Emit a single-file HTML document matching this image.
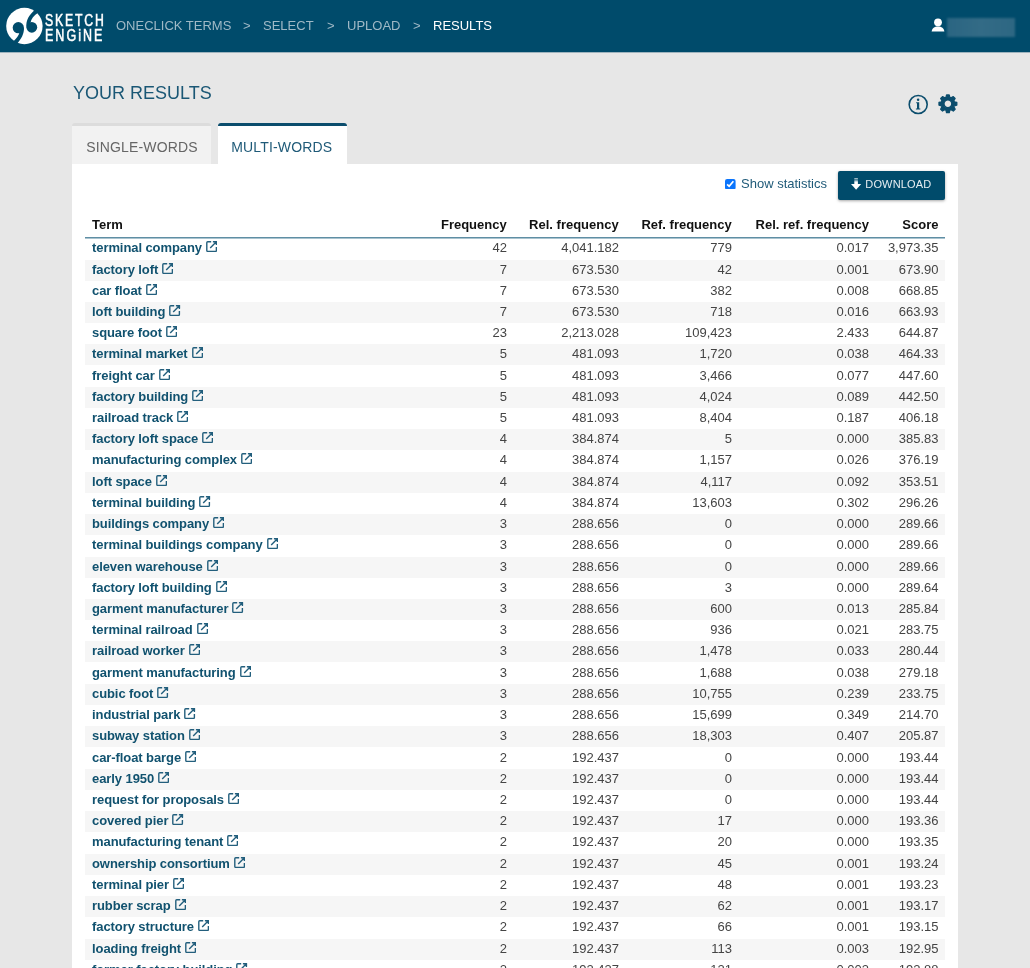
<!DOCTYPE html>
<html><head><meta charset="utf-8">
<style>
*{box-sizing:border-box}
html,body{margin:0;padding:0}
body{width:1030px;height:968px;overflow:hidden;-webkit-font-smoothing:antialiased;background:#e7e7e7;font-family:"Liberation Sans",sans-serif;position:relative}
.hdr{position:absolute;left:0;top:0;width:1030px;height:52px;background:#004b6b;box-shadow:0 1px 0 #9fb4be}
.logo{position:absolute;left:4px;top:6px}
.brand{position:absolute;color:#fff;font-size:16px;line-height:14.5px;-webkit-text-stroke:0.55px #fff;transform-origin:0 0;white-space:nowrap}
.crumbs{position:absolute;left:116px;top:18px;font-size:13px;line-height:16px;color:#9fb9c6;white-space:nowrap}
.crumbs span{position:absolute;top:0}
.crumbs .cur{color:#fff}
.user{position:absolute;left:931px;top:17px}
.blur{position:absolute;left:947px;top:18px;width:68px;height:19px;background:linear-gradient(90deg,#2a6582,#336b86,#2d6783);filter:blur(1px)}
.title{position:absolute;left:73px;top:83px;font-size:18px;line-height:20px;color:#1a5775}
.icons{position:absolute;left:900px;top:88px}
.tab1{position:absolute;left:72px;top:123px;width:139.3px;border-radius:3px 3px 0 0;height:41px;background:#f2f2f2;border-top:3px solid #dcdcdc;color:#666;font-size:14px}
.tab1 span{position:absolute;left:14.3px;top:13px;letter-spacing:0.15px}
.tab2{position:absolute;left:218px;top:123px;width:129px;border-radius:3px 3px 0 0;height:41px;background:#fff;border-top:3px solid #0b4d6d;color:#1f5a78;font-size:14px}
.tab2 span{position:absolute;left:13.3px;top:13px;letter-spacing:0.15px}
.panel{position:absolute;left:72px;top:164px;width:886px;height:820px;background:#fff}
.stat{position:absolute;left:741px;top:176px;font-size:13px;color:#1f5a78}
.dl{position:absolute;left:838px;top:171px;width:107px;height:28.5px;background:#004b6b;border-radius:2px;box-shadow:0 1px 3px rgba(0,0,0,.35);color:#fff;font-size:11px}
.dl span{position:absolute;left:27.3px;top:7.3px;letter-spacing:0.15px;color:#e6eef2}
.dl svg{position:absolute;left:13px;top:7px}
.th{position:absolute;top:217px;font-size:13px;font-weight:700;color:#111;white-space:nowrap;line-height:16px}
.hline{position:absolute;left:85px;top:237px;width:860px;height:2px;background:linear-gradient(#5f8ea4 50%,#a9c3cf 50%)}
.r{position:absolute;left:85px;width:860px;height:21px;font-size:13px;line-height:16px;white-space:nowrap}
.r.odd{background:#f6f6f6}
.r span{position:absolute;top:2px}
.t{left:7px;font-weight:700;color:#11526f;letter-spacing:-0.08px}
.n{color:#444;text-align:right}
.c1{right:438px}.c2{right:326px}.c3{right:213px}.c4{right:76px}.c5{right:6.5px}
.ext{display:inline-block;vertical-align:baseline;margin:0 0 0 4.0px;color:#235f7d;letter-spacing:0}
</style></head><body><div id="wrap" style="position:absolute;left:0;top:0;width:1030px;height:968px;will-change:transform">
<div class="hdr">
  <svg class="logo" width="42" height="42" viewBox="0 0 42 42">
    <circle cx="20.4" cy="20" r="18.2" fill="#fff"/>
    <g fill="#004b6b">
      <circle cx="14.3" cy="21.7" r="5.6"/>
      <path d="M19.9 21.5 C20.3 27.5 17.5 33 12.3 38.5 L8.5 36.2 C12.5 32.5 15 29.5 15.6 26 Z"/>
      <circle cx="27.8" cy="21.3" r="5.4"/>
      <path d="M22.4 21 C21.8 14.5 25 9 31 3.8 L34.5 6.5 C29.8 9.5 27.2 12.5 26.4 17 Z"/>
    </g>
  </svg>
  <div class="brand" style="left:45.1px;top:14px;letter-spacing:2.4px;transform:scaleX(0.765)">SKETCH</div><div class="brand" style="left:44.8px;top:28.5px;letter-spacing:2.6px;transform:scaleX(0.78)">ENGiNE</div>
  <div class="crumbs"><span style="left:0">ONECLICK TERMS</span><span style="left:127px">&gt;</span><span style="left:147px">SELECT</span><span style="left:211px">&gt;</span><span style="left:231px">UPLOAD</span><span style="left:297px">&gt;</span><span class="cur" style="left:317px">RESULTS</span></div>
  <svg class="user" width="14" height="15" viewBox="0 0 14 15"><circle cx="7" cy="5.3" r="3.9" fill="#fff"/><path d="M0.6 14.6C1.1 10.9 3.4 9.4 7 9.4C10.6 9.4 12.9 10.9 13.4 14.6Z" fill="#fff"/></svg>
  <div class="blur"></div>
</div>
<div class="title">YOUR RESULTS</div>
<svg class="icons" width="64" height="32" viewBox="0 0 64 32">
  <circle cx="18.2" cy="16.5" r="9" fill="none" stroke="#0b4d6d" stroke-width="1.6"/>
  <circle cx="18.1" cy="11.8" r="1.25" fill="#0b4d6d"/>
  <path d="M16.2 14.2H19.2V20.6H20.3V21.6H15.9V20.6H17V15.2H16.2Z" fill="#0b4d6d"/>
  <path d="M45.93 9.40 L46.60 6.89 L49.20 6.89 L49.87 9.40 L51.03 9.88 L53.28 8.59 L55.11 10.42 L53.82 12.67 L54.30 13.83 L56.81 14.50 L56.81 17.10 L54.30 17.77 L53.82 18.93 L55.11 21.18 L53.28 23.01 L51.03 21.72 L49.87 22.20 L49.20 24.71 L46.60 24.71 L45.93 22.20 L44.77 21.72 L42.52 23.01 L40.69 21.18 L41.98 18.93 L41.50 17.77 L38.99 17.10 L38.99 14.50 L41.50 13.83 L41.98 12.67 L40.69 10.42 L42.52 8.59 L44.77 9.88ZM51.80 15.80A3.9 3.9 0 1 0 44.00 15.80A3.9 3.9 0 1 0 51.80 15.80Z" fill="#0b4d6d" fill-rule="evenodd" stroke="#0b4d6d" stroke-width="1.3" stroke-linejoin="round"/>
</svg>
<div class="tab1"><span>SINGLE-WORDS</span></div>
<div class="tab2"><span>MULTI-WORDS</span></div>
<div class="panel"></div>
<svg style="position:absolute;left:725px;top:178.6px" width="10.6" height="10.6" viewBox="0 0 11 11"><rect x="0" y="0" width="11" height="11" rx="2.2" fill="#0b75fc"/><path d="M2.2 5.6L4.3 7.6L8.7 2.4" fill="none" stroke="#fff" stroke-width="1.8"/></svg>
<div class="stat">Show statistics</div>
<div class="dl"><svg width="12" height="13" viewBox="0 0 12 13"><rect x="3.3" y="0" width="3.6" height="1" fill="#fff" opacity=".6"/><rect x="3.3" y="1.6" width="3.6" height="1" fill="#fff" opacity=".8"/><rect x="3.3" y="3.2" width="3.6" height="3" fill="#fff"/><path d="M0 6H10.2L5.1 11.8Z" fill="#fff"/></svg><span>DOWNLOAD</span></div>
<div class="th" style="left:92px">Term</div>
<div class="th" style="right:523.3px">Frequency</div>
<div class="th" style="right:411.3px">Rel. frequency</div>
<div class="th" style="right:298.3px">Ref. frequency</div>
<div class="th" style="right:161px">Rel. ref. frequency</div>
<div class="th" style="right:91.5px">Score</div>
<div class="hline"></div>
<div class="r" style="top:238px"><span class="t">terminal company<svg class="ext" width="11.2" height="11.2" viewBox="0 0 11.2 11.2"><path d="M5.2 0.8H1.7Q0.8 0.8 0.8 1.7V9.5Q0.8 10.4 1.7 10.4H9.5Q10.4 10.4 10.4 9.5V5.9M6.9 0.8H10.4V3.9M10.1 1.1L4.2 7" fill="none" stroke="currentColor" stroke-width="1.4"/><path d="M8.3 0.15H11.05V2.9Z" fill="currentColor"/></svg></span><span class="n c1">42</span><span class="n c2">4,041.182</span><span class="n c3">779</span><span class="n c4">0.017</span><span class="n c5">3,973.35</span></div>
<div class="r odd" style="top:260px"><span class="t">factory loft<svg class="ext" width="11.2" height="11.2" viewBox="0 0 11.2 11.2"><path d="M5.2 0.8H1.7Q0.8 0.8 0.8 1.7V9.5Q0.8 10.4 1.7 10.4H9.5Q10.4 10.4 10.4 9.5V5.9M6.9 0.8H10.4V3.9M10.1 1.1L4.2 7" fill="none" stroke="currentColor" stroke-width="1.4"/><path d="M8.3 0.15H11.05V2.9Z" fill="currentColor"/></svg></span><span class="n c1">7</span><span class="n c2">673.530</span><span class="n c3">42</span><span class="n c4">0.001</span><span class="n c5">673.90</span></div>
<div class="r" style="top:281px"><span class="t">car float<svg class="ext" width="11.2" height="11.2" viewBox="0 0 11.2 11.2"><path d="M5.2 0.8H1.7Q0.8 0.8 0.8 1.7V9.5Q0.8 10.4 1.7 10.4H9.5Q10.4 10.4 10.4 9.5V5.9M6.9 0.8H10.4V3.9M10.1 1.1L4.2 7" fill="none" stroke="currentColor" stroke-width="1.4"/><path d="M8.3 0.15H11.05V2.9Z" fill="currentColor"/></svg></span><span class="n c1">7</span><span class="n c2">673.530</span><span class="n c3">382</span><span class="n c4">0.008</span><span class="n c5">668.85</span></div>
<div class="r odd" style="top:302px"><span class="t">loft building<svg class="ext" width="11.2" height="11.2" viewBox="0 0 11.2 11.2"><path d="M5.2 0.8H1.7Q0.8 0.8 0.8 1.7V9.5Q0.8 10.4 1.7 10.4H9.5Q10.4 10.4 10.4 9.5V5.9M6.9 0.8H10.4V3.9M10.1 1.1L4.2 7" fill="none" stroke="currentColor" stroke-width="1.4"/><path d="M8.3 0.15H11.05V2.9Z" fill="currentColor"/></svg></span><span class="n c1">7</span><span class="n c2">673.530</span><span class="n c3">718</span><span class="n c4">0.016</span><span class="n c5">663.93</span></div>
<div class="r" style="top:323px"><span class="t">square foot<svg class="ext" width="11.2" height="11.2" viewBox="0 0 11.2 11.2"><path d="M5.2 0.8H1.7Q0.8 0.8 0.8 1.7V9.5Q0.8 10.4 1.7 10.4H9.5Q10.4 10.4 10.4 9.5V5.9M6.9 0.8H10.4V3.9M10.1 1.1L4.2 7" fill="none" stroke="currentColor" stroke-width="1.4"/><path d="M8.3 0.15H11.05V2.9Z" fill="currentColor"/></svg></span><span class="n c1">23</span><span class="n c2">2,213.028</span><span class="n c3">109,423</span><span class="n c4">2.433</span><span class="n c5">644.87</span></div>
<div class="r odd" style="top:344px"><span class="t">terminal market<svg class="ext" width="11.2" height="11.2" viewBox="0 0 11.2 11.2"><path d="M5.2 0.8H1.7Q0.8 0.8 0.8 1.7V9.5Q0.8 10.4 1.7 10.4H9.5Q10.4 10.4 10.4 9.5V5.9M6.9 0.8H10.4V3.9M10.1 1.1L4.2 7" fill="none" stroke="currentColor" stroke-width="1.4"/><path d="M8.3 0.15H11.05V2.9Z" fill="currentColor"/></svg></span><span class="n c1">5</span><span class="n c2">481.093</span><span class="n c3">1,720</span><span class="n c4">0.038</span><span class="n c5">464.33</span></div>
<div class="r" style="top:366px"><span class="t">freight car<svg class="ext" width="11.2" height="11.2" viewBox="0 0 11.2 11.2"><path d="M5.2 0.8H1.7Q0.8 0.8 0.8 1.7V9.5Q0.8 10.4 1.7 10.4H9.5Q10.4 10.4 10.4 9.5V5.9M6.9 0.8H10.4V3.9M10.1 1.1L4.2 7" fill="none" stroke="currentColor" stroke-width="1.4"/><path d="M8.3 0.15H11.05V2.9Z" fill="currentColor"/></svg></span><span class="n c1">5</span><span class="n c2">481.093</span><span class="n c3">3,466</span><span class="n c4">0.077</span><span class="n c5">447.60</span></div>
<div class="r odd" style="top:387px"><span class="t">factory building<svg class="ext" width="11.2" height="11.2" viewBox="0 0 11.2 11.2"><path d="M5.2 0.8H1.7Q0.8 0.8 0.8 1.7V9.5Q0.8 10.4 1.7 10.4H9.5Q10.4 10.4 10.4 9.5V5.9M6.9 0.8H10.4V3.9M10.1 1.1L4.2 7" fill="none" stroke="currentColor" stroke-width="1.4"/><path d="M8.3 0.15H11.05V2.9Z" fill="currentColor"/></svg></span><span class="n c1">5</span><span class="n c2">481.093</span><span class="n c3">4,024</span><span class="n c4">0.089</span><span class="n c5">442.50</span></div>
<div class="r" style="top:408px"><span class="t">railroad track<svg class="ext" width="11.2" height="11.2" viewBox="0 0 11.2 11.2"><path d="M5.2 0.8H1.7Q0.8 0.8 0.8 1.7V9.5Q0.8 10.4 1.7 10.4H9.5Q10.4 10.4 10.4 9.5V5.9M6.9 0.8H10.4V3.9M10.1 1.1L4.2 7" fill="none" stroke="currentColor" stroke-width="1.4"/><path d="M8.3 0.15H11.05V2.9Z" fill="currentColor"/></svg></span><span class="n c1">5</span><span class="n c2">481.093</span><span class="n c3">8,404</span><span class="n c4">0.187</span><span class="n c5">406.18</span></div>
<div class="r odd" style="top:429px"><span class="t">factory loft space<svg class="ext" width="11.2" height="11.2" viewBox="0 0 11.2 11.2"><path d="M5.2 0.8H1.7Q0.8 0.8 0.8 1.7V9.5Q0.8 10.4 1.7 10.4H9.5Q10.4 10.4 10.4 9.5V5.9M6.9 0.8H10.4V3.9M10.1 1.1L4.2 7" fill="none" stroke="currentColor" stroke-width="1.4"/><path d="M8.3 0.15H11.05V2.9Z" fill="currentColor"/></svg></span><span class="n c1">4</span><span class="n c2">384.874</span><span class="n c3">5</span><span class="n c4">0.000</span><span class="n c5">385.83</span></div>
<div class="r" style="top:450px"><span class="t">manufacturing complex<svg class="ext" width="11.2" height="11.2" viewBox="0 0 11.2 11.2"><path d="M5.2 0.8H1.7Q0.8 0.8 0.8 1.7V9.5Q0.8 10.4 1.7 10.4H9.5Q10.4 10.4 10.4 9.5V5.9M6.9 0.8H10.4V3.9M10.1 1.1L4.2 7" fill="none" stroke="currentColor" stroke-width="1.4"/><path d="M8.3 0.15H11.05V2.9Z" fill="currentColor"/></svg></span><span class="n c1">4</span><span class="n c2">384.874</span><span class="n c3">1,157</span><span class="n c4">0.026</span><span class="n c5">376.19</span></div>
<div class="r odd" style="top:472px"><span class="t">loft space<svg class="ext" width="11.2" height="11.2" viewBox="0 0 11.2 11.2"><path d="M5.2 0.8H1.7Q0.8 0.8 0.8 1.7V9.5Q0.8 10.4 1.7 10.4H9.5Q10.4 10.4 10.4 9.5V5.9M6.9 0.8H10.4V3.9M10.1 1.1L4.2 7" fill="none" stroke="currentColor" stroke-width="1.4"/><path d="M8.3 0.15H11.05V2.9Z" fill="currentColor"/></svg></span><span class="n c1">4</span><span class="n c2">384.874</span><span class="n c3">4,117</span><span class="n c4">0.092</span><span class="n c5">353.51</span></div>
<div class="r" style="top:493px"><span class="t">terminal building<svg class="ext" width="11.2" height="11.2" viewBox="0 0 11.2 11.2"><path d="M5.2 0.8H1.7Q0.8 0.8 0.8 1.7V9.5Q0.8 10.4 1.7 10.4H9.5Q10.4 10.4 10.4 9.5V5.9M6.9 0.8H10.4V3.9M10.1 1.1L4.2 7" fill="none" stroke="currentColor" stroke-width="1.4"/><path d="M8.3 0.15H11.05V2.9Z" fill="currentColor"/></svg></span><span class="n c1">4</span><span class="n c2">384.874</span><span class="n c3">13,603</span><span class="n c4">0.302</span><span class="n c5">296.26</span></div>
<div class="r odd" style="top:514px"><span class="t">buildings company<svg class="ext" width="11.2" height="11.2" viewBox="0 0 11.2 11.2"><path d="M5.2 0.8H1.7Q0.8 0.8 0.8 1.7V9.5Q0.8 10.4 1.7 10.4H9.5Q10.4 10.4 10.4 9.5V5.9M6.9 0.8H10.4V3.9M10.1 1.1L4.2 7" fill="none" stroke="currentColor" stroke-width="1.4"/><path d="M8.3 0.15H11.05V2.9Z" fill="currentColor"/></svg></span><span class="n c1">3</span><span class="n c2">288.656</span><span class="n c3">0</span><span class="n c4">0.000</span><span class="n c5">289.66</span></div>
<div class="r" style="top:535px"><span class="t">terminal buildings company<svg class="ext" width="11.2" height="11.2" viewBox="0 0 11.2 11.2"><path d="M5.2 0.8H1.7Q0.8 0.8 0.8 1.7V9.5Q0.8 10.4 1.7 10.4H9.5Q10.4 10.4 10.4 9.5V5.9M6.9 0.8H10.4V3.9M10.1 1.1L4.2 7" fill="none" stroke="currentColor" stroke-width="1.4"/><path d="M8.3 0.15H11.05V2.9Z" fill="currentColor"/></svg></span><span class="n c1">3</span><span class="n c2">288.656</span><span class="n c3">0</span><span class="n c4">0.000</span><span class="n c5">289.66</span></div>
<div class="r odd" style="top:557px"><span class="t">eleven warehouse<svg class="ext" width="11.2" height="11.2" viewBox="0 0 11.2 11.2"><path d="M5.2 0.8H1.7Q0.8 0.8 0.8 1.7V9.5Q0.8 10.4 1.7 10.4H9.5Q10.4 10.4 10.4 9.5V5.9M6.9 0.8H10.4V3.9M10.1 1.1L4.2 7" fill="none" stroke="currentColor" stroke-width="1.4"/><path d="M8.3 0.15H11.05V2.9Z" fill="currentColor"/></svg></span><span class="n c1">3</span><span class="n c2">288.656</span><span class="n c3">0</span><span class="n c4">0.000</span><span class="n c5">289.66</span></div>
<div class="r" style="top:578px"><span class="t">factory loft building<svg class="ext" width="11.2" height="11.2" viewBox="0 0 11.2 11.2"><path d="M5.2 0.8H1.7Q0.8 0.8 0.8 1.7V9.5Q0.8 10.4 1.7 10.4H9.5Q10.4 10.4 10.4 9.5V5.9M6.9 0.8H10.4V3.9M10.1 1.1L4.2 7" fill="none" stroke="currentColor" stroke-width="1.4"/><path d="M8.3 0.15H11.05V2.9Z" fill="currentColor"/></svg></span><span class="n c1">3</span><span class="n c2">288.656</span><span class="n c3">3</span><span class="n c4">0.000</span><span class="n c5">289.64</span></div>
<div class="r odd" style="top:599px"><span class="t">garment manufacturer<svg class="ext" width="11.2" height="11.2" viewBox="0 0 11.2 11.2"><path d="M5.2 0.8H1.7Q0.8 0.8 0.8 1.7V9.5Q0.8 10.4 1.7 10.4H9.5Q10.4 10.4 10.4 9.5V5.9M6.9 0.8H10.4V3.9M10.1 1.1L4.2 7" fill="none" stroke="currentColor" stroke-width="1.4"/><path d="M8.3 0.15H11.05V2.9Z" fill="currentColor"/></svg></span><span class="n c1">3</span><span class="n c2">288.656</span><span class="n c3">600</span><span class="n c4">0.013</span><span class="n c5">285.84</span></div>
<div class="r" style="top:620px"><span class="t">terminal railroad<svg class="ext" width="11.2" height="11.2" viewBox="0 0 11.2 11.2"><path d="M5.2 0.8H1.7Q0.8 0.8 0.8 1.7V9.5Q0.8 10.4 1.7 10.4H9.5Q10.4 10.4 10.4 9.5V5.9M6.9 0.8H10.4V3.9M10.1 1.1L4.2 7" fill="none" stroke="currentColor" stroke-width="1.4"/><path d="M8.3 0.15H11.05V2.9Z" fill="currentColor"/></svg></span><span class="n c1">3</span><span class="n c2">288.656</span><span class="n c3">936</span><span class="n c4">0.021</span><span class="n c5">283.75</span></div>
<div class="r odd" style="top:641px"><span class="t">railroad worker<svg class="ext" width="11.2" height="11.2" viewBox="0 0 11.2 11.2"><path d="M5.2 0.8H1.7Q0.8 0.8 0.8 1.7V9.5Q0.8 10.4 1.7 10.4H9.5Q10.4 10.4 10.4 9.5V5.9M6.9 0.8H10.4V3.9M10.1 1.1L4.2 7" fill="none" stroke="currentColor" stroke-width="1.4"/><path d="M8.3 0.15H11.05V2.9Z" fill="currentColor"/></svg></span><span class="n c1">3</span><span class="n c2">288.656</span><span class="n c3">1,478</span><span class="n c4">0.033</span><span class="n c5">280.44</span></div>
<div class="r" style="top:663px"><span class="t">garment manufacturing<svg class="ext" width="11.2" height="11.2" viewBox="0 0 11.2 11.2"><path d="M5.2 0.8H1.7Q0.8 0.8 0.8 1.7V9.5Q0.8 10.4 1.7 10.4H9.5Q10.4 10.4 10.4 9.5V5.9M6.9 0.8H10.4V3.9M10.1 1.1L4.2 7" fill="none" stroke="currentColor" stroke-width="1.4"/><path d="M8.3 0.15H11.05V2.9Z" fill="currentColor"/></svg></span><span class="n c1">3</span><span class="n c2">288.656</span><span class="n c3">1,688</span><span class="n c4">0.038</span><span class="n c5">279.18</span></div>
<div class="r odd" style="top:684px"><span class="t">cubic foot<svg class="ext" width="11.2" height="11.2" viewBox="0 0 11.2 11.2"><path d="M5.2 0.8H1.7Q0.8 0.8 0.8 1.7V9.5Q0.8 10.4 1.7 10.4H9.5Q10.4 10.4 10.4 9.5V5.9M6.9 0.8H10.4V3.9M10.1 1.1L4.2 7" fill="none" stroke="currentColor" stroke-width="1.4"/><path d="M8.3 0.15H11.05V2.9Z" fill="currentColor"/></svg></span><span class="n c1">3</span><span class="n c2">288.656</span><span class="n c3">10,755</span><span class="n c4">0.239</span><span class="n c5">233.75</span></div>
<div class="r" style="top:705px"><span class="t">industrial park<svg class="ext" width="11.2" height="11.2" viewBox="0 0 11.2 11.2"><path d="M5.2 0.8H1.7Q0.8 0.8 0.8 1.7V9.5Q0.8 10.4 1.7 10.4H9.5Q10.4 10.4 10.4 9.5V5.9M6.9 0.8H10.4V3.9M10.1 1.1L4.2 7" fill="none" stroke="currentColor" stroke-width="1.4"/><path d="M8.3 0.15H11.05V2.9Z" fill="currentColor"/></svg></span><span class="n c1">3</span><span class="n c2">288.656</span><span class="n c3">15,699</span><span class="n c4">0.349</span><span class="n c5">214.70</span></div>
<div class="r odd" style="top:726px"><span class="t">subway station<svg class="ext" width="11.2" height="11.2" viewBox="0 0 11.2 11.2"><path d="M5.2 0.8H1.7Q0.8 0.8 0.8 1.7V9.5Q0.8 10.4 1.7 10.4H9.5Q10.4 10.4 10.4 9.5V5.9M6.9 0.8H10.4V3.9M10.1 1.1L4.2 7" fill="none" stroke="currentColor" stroke-width="1.4"/><path d="M8.3 0.15H11.05V2.9Z" fill="currentColor"/></svg></span><span class="n c1">3</span><span class="n c2">288.656</span><span class="n c3">18,303</span><span class="n c4">0.407</span><span class="n c5">205.87</span></div>
<div class="r" style="top:748px"><span class="t">car-float barge<svg class="ext" width="11.2" height="11.2" viewBox="0 0 11.2 11.2"><path d="M5.2 0.8H1.7Q0.8 0.8 0.8 1.7V9.5Q0.8 10.4 1.7 10.4H9.5Q10.4 10.4 10.4 9.5V5.9M6.9 0.8H10.4V3.9M10.1 1.1L4.2 7" fill="none" stroke="currentColor" stroke-width="1.4"/><path d="M8.3 0.15H11.05V2.9Z" fill="currentColor"/></svg></span><span class="n c1">2</span><span class="n c2">192.437</span><span class="n c3">0</span><span class="n c4">0.000</span><span class="n c5">193.44</span></div>
<div class="r odd" style="top:769px"><span class="t">early 1950<svg class="ext" width="11.2" height="11.2" viewBox="0 0 11.2 11.2"><path d="M5.2 0.8H1.7Q0.8 0.8 0.8 1.7V9.5Q0.8 10.4 1.7 10.4H9.5Q10.4 10.4 10.4 9.5V5.9M6.9 0.8H10.4V3.9M10.1 1.1L4.2 7" fill="none" stroke="currentColor" stroke-width="1.4"/><path d="M8.3 0.15H11.05V2.9Z" fill="currentColor"/></svg></span><span class="n c1">2</span><span class="n c2">192.437</span><span class="n c3">0</span><span class="n c4">0.000</span><span class="n c5">193.44</span></div>
<div class="r" style="top:790px"><span class="t">request for proposals<svg class="ext" width="11.2" height="11.2" viewBox="0 0 11.2 11.2"><path d="M5.2 0.8H1.7Q0.8 0.8 0.8 1.7V9.5Q0.8 10.4 1.7 10.4H9.5Q10.4 10.4 10.4 9.5V5.9M6.9 0.8H10.4V3.9M10.1 1.1L4.2 7" fill="none" stroke="currentColor" stroke-width="1.4"/><path d="M8.3 0.15H11.05V2.9Z" fill="currentColor"/></svg></span><span class="n c1">2</span><span class="n c2">192.437</span><span class="n c3">0</span><span class="n c4">0.000</span><span class="n c5">193.44</span></div>
<div class="r odd" style="top:811px"><span class="t">covered pier<svg class="ext" width="11.2" height="11.2" viewBox="0 0 11.2 11.2"><path d="M5.2 0.8H1.7Q0.8 0.8 0.8 1.7V9.5Q0.8 10.4 1.7 10.4H9.5Q10.4 10.4 10.4 9.5V5.9M6.9 0.8H10.4V3.9M10.1 1.1L4.2 7" fill="none" stroke="currentColor" stroke-width="1.4"/><path d="M8.3 0.15H11.05V2.9Z" fill="currentColor"/></svg></span><span class="n c1">2</span><span class="n c2">192.437</span><span class="n c3">17</span><span class="n c4">0.000</span><span class="n c5">193.36</span></div>
<div class="r" style="top:832px"><span class="t">manufacturing tenant<svg class="ext" width="11.2" height="11.2" viewBox="0 0 11.2 11.2"><path d="M5.2 0.8H1.7Q0.8 0.8 0.8 1.7V9.5Q0.8 10.4 1.7 10.4H9.5Q10.4 10.4 10.4 9.5V5.9M6.9 0.8H10.4V3.9M10.1 1.1L4.2 7" fill="none" stroke="currentColor" stroke-width="1.4"/><path d="M8.3 0.15H11.05V2.9Z" fill="currentColor"/></svg></span><span class="n c1">2</span><span class="n c2">192.437</span><span class="n c3">20</span><span class="n c4">0.000</span><span class="n c5">193.35</span></div>
<div class="r odd" style="top:854px"><span class="t">ownership consortium<svg class="ext" width="11.2" height="11.2" viewBox="0 0 11.2 11.2"><path d="M5.2 0.8H1.7Q0.8 0.8 0.8 1.7V9.5Q0.8 10.4 1.7 10.4H9.5Q10.4 10.4 10.4 9.5V5.9M6.9 0.8H10.4V3.9M10.1 1.1L4.2 7" fill="none" stroke="currentColor" stroke-width="1.4"/><path d="M8.3 0.15H11.05V2.9Z" fill="currentColor"/></svg></span><span class="n c1">2</span><span class="n c2">192.437</span><span class="n c3">45</span><span class="n c4">0.001</span><span class="n c5">193.24</span></div>
<div class="r" style="top:875px"><span class="t">terminal pier<svg class="ext" width="11.2" height="11.2" viewBox="0 0 11.2 11.2"><path d="M5.2 0.8H1.7Q0.8 0.8 0.8 1.7V9.5Q0.8 10.4 1.7 10.4H9.5Q10.4 10.4 10.4 9.5V5.9M6.9 0.8H10.4V3.9M10.1 1.1L4.2 7" fill="none" stroke="currentColor" stroke-width="1.4"/><path d="M8.3 0.15H11.05V2.9Z" fill="currentColor"/></svg></span><span class="n c1">2</span><span class="n c2">192.437</span><span class="n c3">48</span><span class="n c4">0.001</span><span class="n c5">193.23</span></div>
<div class="r odd" style="top:896px"><span class="t">rubber scrap<svg class="ext" width="11.2" height="11.2" viewBox="0 0 11.2 11.2"><path d="M5.2 0.8H1.7Q0.8 0.8 0.8 1.7V9.5Q0.8 10.4 1.7 10.4H9.5Q10.4 10.4 10.4 9.5V5.9M6.9 0.8H10.4V3.9M10.1 1.1L4.2 7" fill="none" stroke="currentColor" stroke-width="1.4"/><path d="M8.3 0.15H11.05V2.9Z" fill="currentColor"/></svg></span><span class="n c1">2</span><span class="n c2">192.437</span><span class="n c3">62</span><span class="n c4">0.001</span><span class="n c5">193.17</span></div>
<div class="r" style="top:917px"><span class="t">factory structure<svg class="ext" width="11.2" height="11.2" viewBox="0 0 11.2 11.2"><path d="M5.2 0.8H1.7Q0.8 0.8 0.8 1.7V9.5Q0.8 10.4 1.7 10.4H9.5Q10.4 10.4 10.4 9.5V5.9M6.9 0.8H10.4V3.9M10.1 1.1L4.2 7" fill="none" stroke="currentColor" stroke-width="1.4"/><path d="M8.3 0.15H11.05V2.9Z" fill="currentColor"/></svg></span><span class="n c1">2</span><span class="n c2">192.437</span><span class="n c3">66</span><span class="n c4">0.001</span><span class="n c5">193.15</span></div>
<div class="r odd" style="top:939px"><span class="t">loading freight<svg class="ext" width="11.2" height="11.2" viewBox="0 0 11.2 11.2"><path d="M5.2 0.8H1.7Q0.8 0.8 0.8 1.7V9.5Q0.8 10.4 1.7 10.4H9.5Q10.4 10.4 10.4 9.5V5.9M6.9 0.8H10.4V3.9M10.1 1.1L4.2 7" fill="none" stroke="currentColor" stroke-width="1.4"/><path d="M8.3 0.15H11.05V2.9Z" fill="currentColor"/></svg></span><span class="n c1">2</span><span class="n c2">192.437</span><span class="n c3">113</span><span class="n c4">0.003</span><span class="n c5">192.95</span></div>
<div class="r" style="top:960px"><span class="t">former factory building<svg class="ext" width="11.2" height="11.2" viewBox="0 0 11.2 11.2"><path d="M5.2 0.8H1.7Q0.8 0.8 0.8 1.7V9.5Q0.8 10.4 1.7 10.4H9.5Q10.4 10.4 10.4 9.5V5.9M6.9 0.8H10.4V3.9M10.1 1.1L4.2 7" fill="none" stroke="currentColor" stroke-width="1.4"/><path d="M8.3 0.15H11.05V2.9Z" fill="currentColor"/></svg></span><span class="n c1">2</span><span class="n c2">192.437</span><span class="n c3">121</span><span class="n c4">0.003</span><span class="n c5">192.88</span></div>
</div></body></html>
